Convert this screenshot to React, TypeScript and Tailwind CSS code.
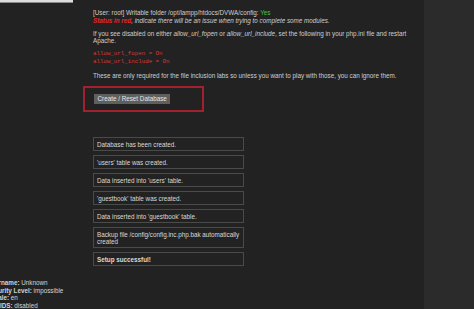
import React from "react";

const msgs: { t: string; b?: boolean }[] = [
  { t: "Database has been created." },
  { t: "'users' table was created." },
  { t: "Data inserted into 'users' table." },
  { t: "'guestbook' table was created." },
  { t: "Data inserted into 'guestbook' table." },
  { t: "Backup file /config/config.inc.php.bak automatically created" },
  { t: "Setup successful!", b: true },
];

export default function App() {
  return (
    <div
      className="w-[474px] h-[309px] overflow-hidden flex bg-[#222222] text-[#cfcfcf]"
      style={{ fontFamily: '"Liberation Sans", Arial, sans-serif' }}
    >
      {/* left column */}
      <div className="w-[93px] shrink-0 flex flex-col">
        <div className="h-[3px] w-[73px] bg-[#dcdcdc] border-b border-[#8a8a8a]" />
        <div className="mt-[276px] ml-[-13px] text-[6.3px] leading-[7.5px] whitespace-nowrap text-[#d4d4d4]">
          <div><b>Username:</b> Unknown</div>
          <div><b>Security Level:</b> impossible</div>
          <div><b>Locale:</b> en</div>
          <div><b>PHPIDS:</b> disabled</div>
        </div>
      </div>

      {/* main column */}
      <div className="w-[331px] shrink-0 pt-[9px] text-[6.3px] leading-[7.5px]">
        <p className="whitespace-nowrap">
          [User: root] Writable folder /opt/lampp/htdocs/DVWA/config: <span className="text-[#4fbf4f]">Yes</span>
        </p>
        <p className="whitespace-nowrap italic">
          <span className="text-[#e02a2a] font-bold">Status in red</span>, indicate there will be an issue when trying to complete some modules.
        </p>
        <p className="mt-[5.5px] pr-[4px]">
          If you see disabled on either <i>allow_url_fopen</i> or <i>allow_url_include</i>, set the following in your php.ini file and restart Apache.
        </p>
        <div
          className="mt-[5px] text-[5.8px] leading-[8.5px] text-[#d23a3a]"
          style={{ fontFamily: '"Liberation Mono", "Courier New", monospace' }}
        >
          <div>allow_url_fopen = On</div>
          <div>allow_url_include = On</div>
        </div>
        <p className="mt-[5px] whitespace-nowrap">
          These are only required for the file inclusion labs so unless you want to play with those, you can ignore them.
        </p>
        <div className="mt-[7px] ml-[-10px] w-[121px] h-[26px] border-2 border-[#a3202e] pl-[9px] pt-[6px]">
          <div className="inline-block bg-[#5f5f5f] text-[#e6e6e6] px-[3.5px] h-[10px] leading-[10px] whitespace-nowrap">
            Create / Reset Database
          </div>
        </div>
        <div className="mt-[25px] w-[151px] flex flex-col gap-[4px]">
          {msgs.map((m, i) => (
            <div
              key={i}
              className={
                "border border-[#4a4a4a] px-[3px] py-[2.5px] leading-[7px] text-[#dadada]" +
                (m.b ? " font-bold" : "")
              }
            >
              {m.t}
            </div>
          ))}
        </div>
      </div>

      {/* right column */}
      <div className="flex-1 bg-[#2b2b2b]" />
    </div>
  );
}
